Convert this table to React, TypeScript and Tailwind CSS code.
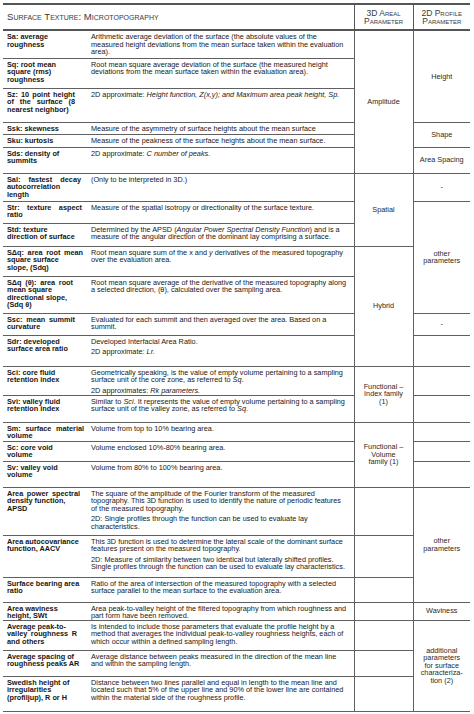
import React from "react";

type LabelLine = string | [string, string];
type Cell = { t: React.ReactNode[]; span: number };
type Row = {
  h: string;
  label: LabelLine[];
  desc: React.ReactNode[][];
  c3?: Cell;
  c4?: Cell;
};

const E: Cell = { t: [], span: 1 };

const rows: Row[] = [
  {
    h: "h-[28px]",
    label: ["Sa: average", "roughness"],
    desc: [[
      "Arithmetic average deviation of the surface (the absolute values of the",
      "measured height deviations from the mean surface taken within the evaluation",
      "area).",
    ]],
    c3: { t: ["Amplitude"], span: 6 },
    c4: { t: ["Height"], span: 3 },
  },
  {
    h: "h-[30px]",
    label: ["Sq: root mean", "square (rms)", "roughness"],
    desc: [[
      "Root mean square average deviation of the surface (the measured height",
      "deviations from the mean surface taken within the evaluation area).",
    ]],
  },
  {
    h: "h-[34px]",
    label: [["Sz: 10 point height", "w-[68px]"], ["of the surface (8", "w-[68px]"], "nearest neighbor)"],
    desc: [[
      <>2D approximate: <i>Height function, Z(x,y); and Maximum area peak height, Sp.</i></>,
    ]],
  },
  {
    h: "h-[12px]",
    label: ["Ssk: skewness"],
    desc: [["Measure of the asymmetry of surface heights about the mean surface"]],
    c4: { t: ["Shape"], span: 2 },
  },
  {
    h: "h-[13px]",
    label: ["Sku: kurtosis"],
    desc: [["Measure of the peakness of the surface heights about the mean surface."]],
  },
  {
    h: "h-[26px]",
    label: ["Sds: density of", "summits"],
    desc: [[<>2D approximate: <i>C number of peaks.</i></>]],
    c4: { t: ["Area Spacing"], span: 1 },
  },
  {
    h: "h-[28px]",
    label: [["Sal: fastest decay", "w-[74px]"], "autocorrelation", "length"],
    desc: [["(Only to be interpreted in 3D.)"]],
    c3: { t: ["Spatial"], span: 3 },
    c4: { t: ["-"], span: 1 },
  },
  {
    h: "h-[22px]",
    label: [["Str: texture aspect", "w-[75px]"], "ratio"],
    desc: [["Measure of the spatial isotropy or directionality of the surface texture."]],
    c4: { t: ["other", "parameters"], span: 4 },
  },
  {
    h: "h-[23px]",
    label: ["Std: texture", "direction of surface"],
    desc: [[
      <>Determined by the APSD (<i>Angular Power Spectral Density Function</i>) and is a</>,
      "measure of the angular direction of the dominant lay comprising a surface.",
    ]],
  },
  {
    h: "h-[30px]",
    label: [["SΔq: area root mean", "w-[76px]"], "square surface", "slope, (Sdq)"],
    desc: [[
      <>Root mean square sum of the x and <i>y</i> derivatives of the measured topography</>,
      "over the evaluation area.",
    ]],
    c3: { t: ["Hybrid"], span: 4 },
  },
  {
    h: "h-[37px]",
    label: [["SΔq (θ): area root", "w-[66px]"], "mean square", "directional slope,", "(Sdq θ)"],
    desc: [[
      "Root mean square average of the derivative of the measured topography along",
      "a selected direction, (θ), calculated over the sampling area.",
    ]],
  },
  {
    h: "h-[22px]",
    label: [["Ssc: mean summit", "w-[68px]"], "curvature"],
    desc: [[
      "Evaluated for each summit and then averaged over the area. Based on a",
      "summit.",
    ]],
    c4: { t: ["-"], span: 1 },
  },
  {
    h: "h-[31px]",
    label: ["Sdr: developed", "surface area ratio"],
    desc: [["Developed Interfacial Area Ratio."], [<>2D approximate: <i>Lr.</i></>]],
    c4: E,
  },
  {
    h: "h-[29px]",
    label: ["Sci: core fluid", "retention index"],
    desc: [
      [
        "Geometrically speaking, is the value of empty volume pertaining to a sampling",
        <>surface unit of the core zone, as referred to <i>Sq</i>.</>,
      ],
      [<>2D approximates: <i>Rk parameters.</i></>],
    ],
    c3: { t: ["Functional –", "Index family", "(1)"], span: 2 },
    c4: E,
  },
  {
    h: "h-[27px]",
    label: ["Svi: valley fluid", "retention index"],
    desc: [[
      <>Similar to <i>Sci</i>. It represents the value of empty volume pertaining to a sampling</>,
      <>surface unit of the valley zone, as referred to <i>Sq</i>.</>,
    ]],
    c4: E,
  },
  {
    h: "h-[19px]",
    label: [["Sm: surface material", "w-[77px]"], "volume"],
    desc: [["Volume from top to 10% bearing area."]],
    c3: { t: ["Functional –", "Volume", "family (1)"], span: 3 },
    c4: E,
  },
  {
    h: "h-[20px]",
    label: ["Sc: core void", "volume"],
    desc: [["Volume enclosed 10%-80% bearing area."]],
    c4: E,
  },
  {
    h: "h-[26px]",
    label: ["Sv: valley void", "volume"],
    desc: [["Volume from 80% to 100% bearing area."]],
    c4: E,
  },
  {
    h: "h-[48px]",
    label: [["Area power spectral", "w-[73px]"], "density function,", "APSD"],
    desc: [
      [
        "The square of the amplitude of the Fourier transform of the measured",
        "topography. This 3D function is used to identify the nature of periodic features",
        "of the measured topography.",
      ],
      [
        "2D: Single profiles through the function can be used to evaluate lay",
        "characteristics.",
      ],
    ],
    c3: E,
    c4: { t: ["other", "parameters"], span: 3 },
  },
  {
    h: "h-[42px]",
    label: ["Area autocovariance", "function, AACV"],
    desc: [
      [
        "This 3D function is used to determine the lateral scale of the dominant surface",
        "features present on the measured topography.",
      ],
      [
        "2D: Measure of similarity between two identical but laterally shifted profiles.",
        "Single profiles through the function can be used to evaluate lay characteristics.",
      ],
    ],
    c3: E,
  },
  {
    h: "h-[25px]",
    label: ["Surface bearing area", "ratio"],
    desc: [[
      "Ratio of the area of intersection of the measured topography with a selected",
      "surface parallel to the mean surface to the evaluation area.",
    ]],
    c3: E,
  },
  {
    h: "h-[17px]",
    label: ["Area waviness", "height, SWt"],
    desc: [[
      "Area peak-to-valley height of the filtered topography from which roughness and",
      "part form have been removed.",
    ]],
    c3: E,
    c4: { t: ["Waviness"], span: 1 },
  },
  {
    h: "h-[30px]",
    label: ["Average peak-to-", ["valley roughness R", "w-[70px]"], "and others"],
    desc: [[
      "Is intended to include those parameters that evaluate the profile height by a",
      "method that averages the individual peak-to-valley roughness heights, each of",
      "which occur within a defined sampling length.",
    ]],
    c3: E,
    c4: { t: ["additional", "parameters", "for surface", "characteriza-", "tion (2)"], span: 3 },
  },
  {
    h: "h-[26px]",
    label: ["Average spacing of", "roughness peaks AR"],
    desc: [[
      "Average distance between peaks measured in the direction of the mean line",
      "and within the sampling length.",
    ]],
    c3: E,
  },
  {
    h: "h-[35px]",
    label: ["Swedish height of", "irregularities", "(profiljup), R or H"],
    desc: [[
      "Distance between two lines parallel and equal in length to the mean line and",
      "located such that 5% of the upper line and 90% of the lower line are contained",
      "within the material side of the roughness profile.",
    ]],
    c3: E,
  },
];

function Label({ lines }: { lines: LabelLine[] }) {
  return (
    <div className="font-bold text-[#161616]">
      {lines.map((l, i) =>
        typeof l === "string" ? (
          <div key={i} className="whitespace-nowrap">{l}</div>
        ) : (
          <div key={i} className={`${l[1]} text-justify [text-align-last:justify]`}>{l[0]}</div>
        )
      )}
    </div>
  );
}

function Desc({ paras }: { paras: React.ReactNode[][] }) {
  return (
    <div className="text-[#202020]">
      {paras.map((p, i) => (
        <div key={i} className={i > 0 ? "mt-[3px]" : ""}>
          {p.map((l, j) => (
            <div key={j} className="whitespace-nowrap">{l}</div>
          ))}
        </div>
      ))}
    </div>
  );
}

function Side({ lines }: { lines: React.ReactNode[] }) {
  return (
    <div className="text-center text-[#2a2a2a] leading-[7.5px]">
      {lines.map((l, i) => (
        <div key={i} className="whitespace-nowrap">{l}</div>
      ))}
    </div>
  );
}

export default function App() {
  return (
    <div className="w-[474px] h-[714px] bg-white pt-[3px] [font-family:'Liberation_Sans',Arial,sans-serif]">
      <table className="ml-[3px] w-[467px] table-fixed border-collapse border-t-2 border-[#555555] text-[7.3px] leading-[7.5px]">
        <colgroup>
          <col className="w-[85px]" />
          <col className="w-[266px]" />
          <col className="w-[59px]" />
          <col className="w-[57px]" />
        </colgroup>
        <tbody>
          <tr className="h-[26px]">
            <td colSpan={2} className="border-b-2 border-r border-[#555555] pl-[4px] align-middle text-[9.6px] text-[#3a3a3a] [font-variant:small-caps] whitespace-nowrap">
              Surface Texture: Microtopography
            </td>
            <td className="border-b-2 border-r border-[#555555] text-center align-middle text-[8.5px] leading-[8.5px] text-[#3a3a3a] [font-variant:small-caps]">
              <div>3D Areal</div>
              <div>Parameter</div>
            </td>
            <td className="border-b-2 border-[#555555] text-center align-middle text-[8.5px] leading-[8.5px] text-[#3a3a3a] [font-variant:small-caps]">
              <div>2D Profile</div>
              <div>Parameter</div>
            </td>
          </tr>
          {rows.map((r, i) => (
            <tr key={i} className={r.h}>
              <td className="border-b border-[#606060] pl-[4px] pt-[2px] align-top">
                <Label lines={r.label} />
              </td>
              <td className="border-b border-r border-[#606060] pl-[3px] pt-[2px] align-top">
                <Desc paras={r.desc} />
              </td>
              {r.c3 && (
                <td rowSpan={r.c3.span} className="border-b border-r border-[#606060] align-middle">
                  <Side lines={r.c3.t} />
                </td>
              )}
              {r.c4 && (
                <td rowSpan={r.c4.span} className="border-b border-[#606060] align-middle">
                  <Side lines={r.c4.t} />
                </td>
              )}
            </tr>
          ))}
        </tbody>
      </table>
    </div>
  );
}
